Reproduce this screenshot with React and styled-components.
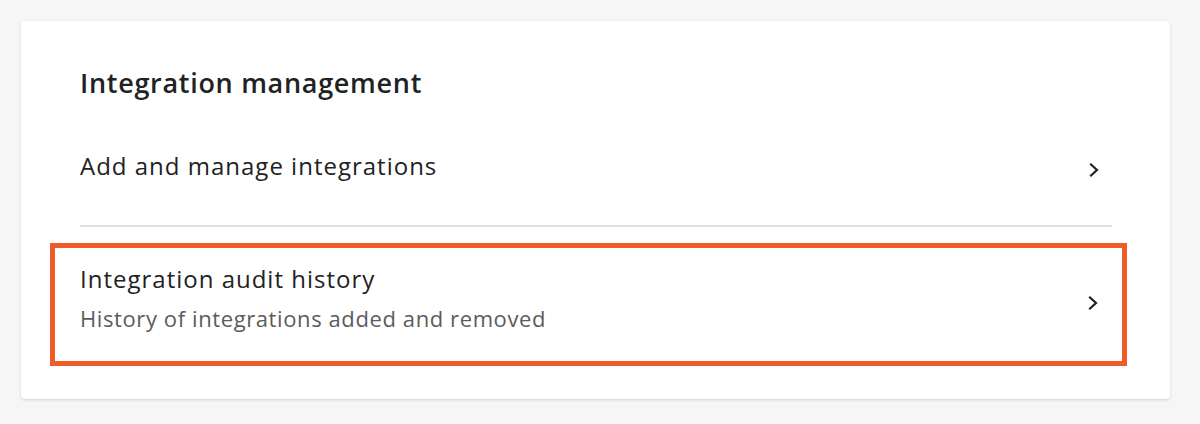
import React from 'react';
import styled, { createGlobalStyle } from 'styled-components';

const GlobalStyle = createGlobalStyle`
  * {
    box-sizing: border-box;
  }
  body {
    margin: 0;
    background-color: #f6f6f6;
    font-family: 'Open Sans', 'Noto Sans', sans-serif;
    color: #222;
  }
`;

const Page = styled.div`
  padding: 21px 30px 26px 21px;
`;

const Card = styled.div`
  background-color: #fff;
  border-radius: 4px;
  box-shadow: 0 1px 3px rgba(0, 0, 0, 0.15);
  padding: 46px 58px 33px 59px;
`;

const Heading = styled.h2`
  margin: 0 0 15px;
  font-size: 27px;
  line-height: 32px;
  font-weight: 600;
  letter-spacing: 0.7px;
  color: #222;
`;

const Row = styled.div`
  display: flex;
  align-items: center;
  justify-content: space-between;
  height: ${(p) => (p.$highlight ? '123px' : '113px')};
  border-bottom: ${(p) => (p.$divider ? '2px solid #e0e0e0' : 'none')};
  margin: ${(p) => (p.$highlight ? '16px -15px 0 -30px' : '0')};
  padding: ${(p) => (p.$highlight ? '0 23px 0 25px' : '0 12px 0 0')};
  border: ${(p) => (p.$highlight ? '5px solid #f05a28' : undefined)};
  cursor: pointer;
`;

const Text = styled.div`
  display: flex;
  flex-direction: column;
  gap: 12px;
  margin-top: ${(p) => (p.$offset ? `${p.$offset}px` : '-8px')};
`;

const Title = styled.div`
  font-size: 24px;
  line-height: 28px;
  font-weight: 500;
  letter-spacing: 1px;
  color: #222;
`;

const Subtitle = styled.div`
  font-size: 22px;
  line-height: 26px;
  letter-spacing: 0.6px;
  color: #5c5c5c;
`;

const ChevronIcon = styled.svg`
  flex-shrink: 0;
  margin-top: ${(p) => (p.$lift ? `-${p.$lift}px` : '0')};
`;

const Chevron = ({ lift }) => (
  <ChevronIcon $lift={lift} width="12" height="16" viewBox="0 0 12 16" fill="none">
    <path d="M3 2.5L9 8L3 13.5" stroke="#222" strokeWidth="2.2" strokeLinecap="square" />
  </ChevronIcon>
);

export default function App() {
  return (
    <Page>
      <GlobalStyle />
      <Card>
        <Heading>Integration management</Heading>
        <Row $divider>
          <Text>
            <Title>Add and manage integrations</Title>
          </Text>
          <Chevron />
        </Row>
        <Row $highlight>
          <Text $offset={-14}>
            <Title>Integration audit history</Title>
            <Subtitle>History of integrations added and removed</Subtitle>
          </Text>
          <Chevron lift={4} />
        </Row>
      </Card>
    </Page>
  );
}
